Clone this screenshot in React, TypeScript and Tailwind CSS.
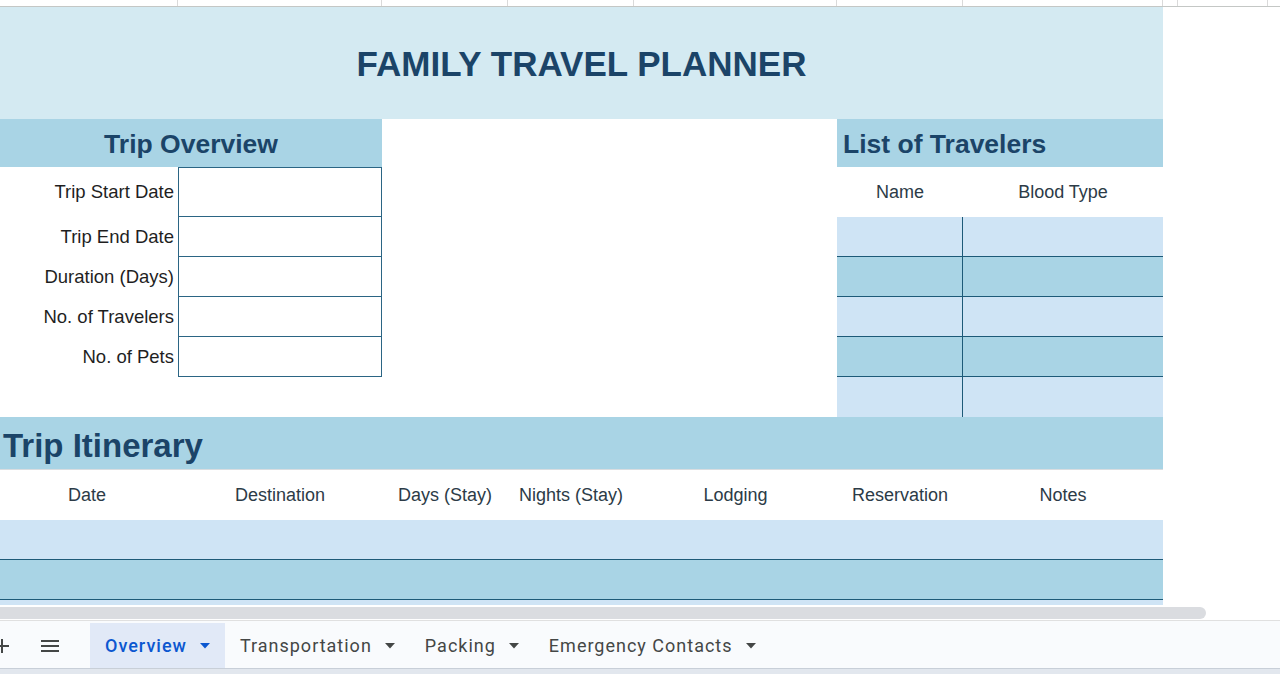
import React from "react";

const F = { fontFamily: '"Liberation Sans", Arial, sans-serif' };

function Caret() {
  return (
    <svg width="10" height="6" viewBox="0 0 10 6" className="ml-[13px] shrink-0">
      <path d="M0 0 L10 0 L5 5.5 Z" fill="currentColor" />
    </svg>
  );
}

function Tab({ label, active }: { label: string; active?: boolean }) {
  return (
    <div
      className={
        "flex h-[45px] items-center px-[15px] " +
        (active ? "bg-[#e1e9f7] text-[#0b57d0]" : "text-[#444746]")
      }
    >
      <span className={"text-[18px] tracking-[1px] " + (active ? "font-medium" : "font-normal")}>{label}</span>
      <Caret />
    </div>
  );
}

export default function App() {
  const topCols = [178, 204, 126, 126, 203, 126, 200, 15, 90];
  const label = "flex items-center justify-end pr-[4px] text-[18.5px] text-[#1f1f1f]";
  const box = "border-x border-b border-[#2b6584] bg-white";
  const colHead = "flex items-center justify-center text-[18px] text-[#2c3b47]";
  const light = "bg-[#cfe4f5]";
  const dark = "bg-[#a9d4e5]";
  return (
    <div className="w-[1280px] h-[674px] overflow-hidden bg-white" style={F}>
      {/* column gridline strip */}
      <div className="flex h-[7px] border-b border-[#c4c7c5]">
        {topCols.map((w, i) => (
          <div key={i} className="h-full border-r border-[#dadada] shrink-0" style={{ width: w }} />
        ))}
        <div className="flex-1" />
      </div>

      {/* sheet */}
      <div className="flex">
        <div
          className="grid w-[1163px] shrink-0 grid-cols-[178px_204px_126px_126px_203px_126px_200px] grid-rows-[112px_48px_50px_40px_40px_40px_40px_40px_53px_50px_40px_40px_5px]"
        >
          {/* title */}
          <div className="col-span-7 flex items-center justify-center bg-[#d4eaf2] pt-[1px]">
            <h1 className="text-[35px] font-bold text-[#1b4468] leading-none">FAMILY TRAVEL PLANNER</h1>
          </div>

          {/* section headers */}
          <div className="col-span-2 flex items-center justify-center bg-[#a9d4e5] pt-[3px]">
            <h2 className="text-[26.5px] font-bold text-[#1b4468] leading-none">Trip Overview</h2>
          </div>
          <div className="col-span-3" />
          <div className="col-span-2 flex items-center bg-[#a9d4e5] pl-[6px] pt-[3px]">
            <h2 className="text-[26.5px] font-bold text-[#1b4468] leading-none">List of Travelers</h2>
          </div>

          {/* row: Trip Start Date / Name / Blood Type */}
          <div className={label}>Trip Start Date</div>
          <div className={box + " border-t"} />
          <div className="col-span-3" />
          <div className={colHead}>Name</div>
          <div className={colHead}>Blood Type</div>

          {/* remaining overview rows */}
          {["Trip End Date", "Duration (Days)", "No. of Travelers", "No. of Pets", ""].map((t, i) => (
            <React.Fragment key={t + i}>
              <div className={label}>{t}</div>
              {t ? <div className={box} /> : <div />}
              <div className="col-span-3" />
              <div
                className={
                  (i % 2 === 0 ? light : dark) +
                  " border-r border-[#1d5a78]" +
                  (i < 4 ? " border-b" : "")
                }
              />
              <div className={(i % 2 === 0 ? light : dark) + (i < 4 ? " border-b border-[#1d5a78]" : "")} />
            </React.Fragment>
          ))}

          {/* itinerary */}
          <div className="col-span-7 flex items-center bg-[#a9d4e5] pl-[3px] pt-[4px] border-b border-[#d9dde0]">
            <h2 className="text-[33px] font-bold text-[#1b4468] leading-none">Trip Itinerary</h2>
          </div>
          {["Date", "Destination", "Days (Stay)", "Nights (Stay)", "Lodging", "Reservation", "Notes"].map((h, i) => (
            <div key={h} className={colHead + (i === 0 ? " pr-[4px]" : "")}>
              {h}
            </div>
          ))}
          <div className={"col-span-7 border-b border-[#1d5a78] " + light} />
          <div className={"col-span-7 border-b border-[#1d5a78] " + dark} />
          <div className={"col-span-7 " + light} />
        </div>
        <div className="flex-1" />
      </div>

      {/* horizontal scrollbar */}
      <div className="flex h-[16px] items-center border-b border-[#e0e0e0] bg-white">
        <div className="h-[12px] w-[1206px] rounded-r-full bg-[#dadce0]" />
      </div>

      {/* sheet tabs */}
      <div className="flex h-[47px] items-center bg-[#f9fbfd]" style={{ fontFamily: "Roboto, sans-serif" }}>
        <svg width="14" height="14" viewBox="0 0 14 14" className="ml-[-5px] mt-[2px] text-[#444746]">
          <path d="M7 0 V14 M0 7 H14" stroke="currentColor" strokeWidth="2" />
        </svg>
        <svg width="18" height="12" viewBox="0 0 18 12" className="ml-[32px] mt-[2px] text-[#444746]">
          <path d="M0 1 H18 M0 6 H18 M0 11 H18" stroke="currentColor" strokeWidth="2" />
        </svg>
        <div className="ml-[31px] flex h-full items-end">
          <Tab label="Overview" active />
          <Tab label="Transportation" />
          <Tab label="Packing" />
          <Tab label="Emergency Contacts" />
        </div>
      </div>
      <div className="h-[6px] border-t border-[#c8cfd8] bg-[#e2e7ee]" />
    </div>
  );
}
